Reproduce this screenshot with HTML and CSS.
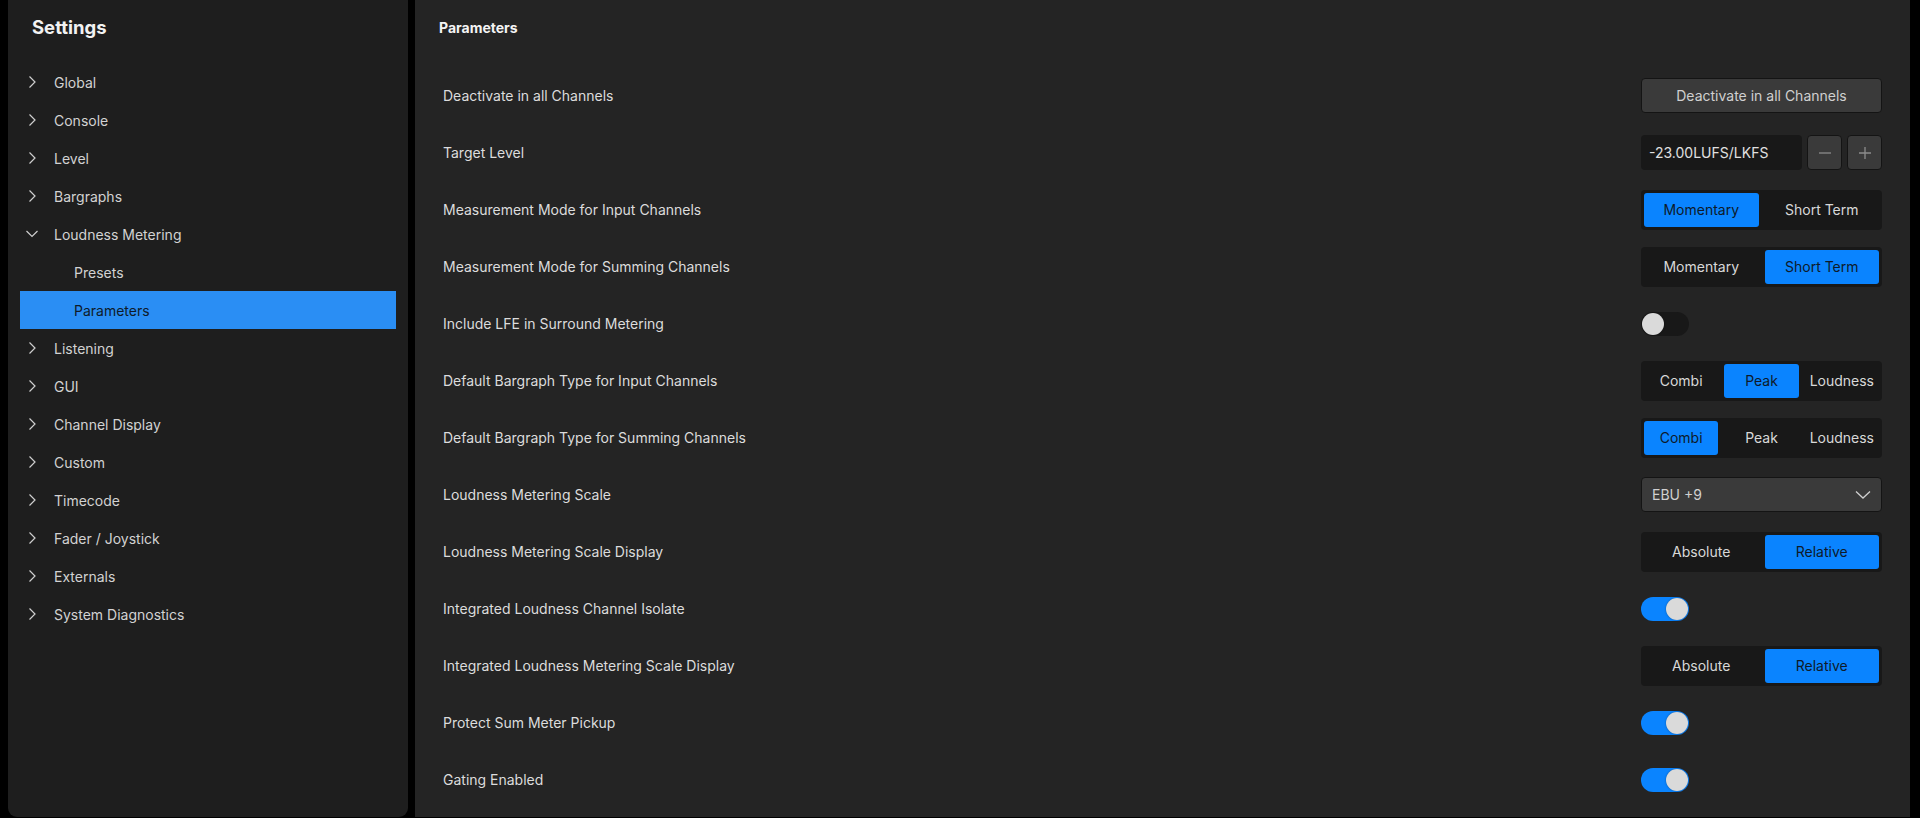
FILE: index.html
```html
<!DOCTYPE html>
<html>
<head>
<meta charset="utf-8">
<link rel="stylesheet" href="styles.css">
</head>
<body>
<div class="app">
  <aside class="sidebar">
    <div class="side-title">Settings</div>
    <nav class="nav">
      <div class="item"><span class="chev"><svg width="12" height="12" viewBox="0 0 12 12"><path d="M3.5 0.5 L9 6 L3.5 11.5" fill="none" stroke="#cfcfcf" stroke-width="1.2"/></svg></span><span>Global</span></div>
      <div class="item"><span class="chev"><svg width="12" height="12" viewBox="0 0 12 12"><path d="M3.5 0.5 L9 6 L3.5 11.5" fill="none" stroke="#cfcfcf" stroke-width="1.2"/></svg></span><span>Console</span></div>
      <div class="item"><span class="chev"><svg width="12" height="12" viewBox="0 0 12 12"><path d="M3.5 0.5 L9 6 L3.5 11.5" fill="none" stroke="#cfcfcf" stroke-width="1.2"/></svg></span><span>Level</span></div>
      <div class="item"><span class="chev"><svg width="12" height="12" viewBox="0 0 12 12"><path d="M3.5 0.5 L9 6 L3.5 11.5" fill="none" stroke="#cfcfcf" stroke-width="1.2"/></svg></span><span>Bargraphs</span></div>
      <div class="item"><span class="chev"><svg width="12" height="12" viewBox="0 0 12 12"><path d="M0.5 3 L6 8.5 L11.5 3" fill="none" stroke="#cfcfcf" stroke-width="1.2"/></svg></span><span>Loudness Metering</span></div>
      <div class="item sub"><span>Presets</span></div>
      <div class="item sub active"><span>Parameters</span></div>
      <div class="item"><span class="chev"><svg width="12" height="12" viewBox="0 0 12 12"><path d="M3.5 0.5 L9 6 L3.5 11.5" fill="none" stroke="#cfcfcf" stroke-width="1.2"/></svg></span><span>Listening</span></div>
      <div class="item"><span class="chev"><svg width="12" height="12" viewBox="0 0 12 12"><path d="M3.5 0.5 L9 6 L3.5 11.5" fill="none" stroke="#cfcfcf" stroke-width="1.2"/></svg></span><span>GUI</span></div>
      <div class="item"><span class="chev"><svg width="12" height="12" viewBox="0 0 12 12"><path d="M3.5 0.5 L9 6 L3.5 11.5" fill="none" stroke="#cfcfcf" stroke-width="1.2"/></svg></span><span>Channel Display</span></div>
      <div class="item"><span class="chev"><svg width="12" height="12" viewBox="0 0 12 12"><path d="M3.5 0.5 L9 6 L3.5 11.5" fill="none" stroke="#cfcfcf" stroke-width="1.2"/></svg></span><span>Custom</span></div>
      <div class="item"><span class="chev"><svg width="12" height="12" viewBox="0 0 12 12"><path d="M3.5 0.5 L9 6 L3.5 11.5" fill="none" stroke="#cfcfcf" stroke-width="1.2"/></svg></span><span>Timecode</span></div>
      <div class="item"><span class="chev"><svg width="12" height="12" viewBox="0 0 12 12"><path d="M3.5 0.5 L9 6 L3.5 11.5" fill="none" stroke="#cfcfcf" stroke-width="1.2"/></svg></span><span>Fader / Joystick</span></div>
      <div class="item"><span class="chev"><svg width="12" height="12" viewBox="0 0 12 12"><path d="M3.5 0.5 L9 6 L3.5 11.5" fill="none" stroke="#cfcfcf" stroke-width="1.2"/></svg></span><span>Externals</span></div>
      <div class="item"><span class="chev"><svg width="12" height="12" viewBox="0 0 12 12"><path d="M3.5 0.5 L9 6 L3.5 11.5" fill="none" stroke="#cfcfcf" stroke-width="1.2"/></svg></span><span>System Diagnostics</span></div>
    </nav>
  </aside>
  <main class="main">
    <div class="main-title">Parameters</div>
    <div class="rows">
      <div class="row">
        <div class="label">Deactivate in all Channels</div>
        <div class="ctrl"><div class="btn">Deactivate in all Channels</div></div>
      </div>
      <div class="row">
        <div class="label">Target Level</div>
        <div class="ctrl stepper">
          <div class="field">-23.00LUFS/LKFS</div>
          <div class="sbtn"><svg width="14" height="14" viewBox="0 0 14 14"><path d="M1 7 H13" stroke="#8c8c8c" stroke-width="1.3"/></svg></div>
          <div class="sbtn"><svg width="14" height="14" viewBox="0 0 14 14"><path d="M1 7 H13 M7 1 V13" stroke="#8c8c8c" stroke-width="1.3"/></svg></div>
        </div>
      </div>
      <div class="row">
        <div class="label">Measurement Mode for Input Channels</div>
        <div class="ctrl seg"><div class="opt on">Momentary</div><div class="opt">Short Term</div></div>
      </div>
      <div class="row">
        <div class="label">Measurement Mode for Summing Channels</div>
        <div class="ctrl seg"><div class="opt">Momentary</div><div class="opt on">Short Term</div></div>
      </div>
      <div class="row">
        <div class="label">Include LFE in Surround Metering</div>
        <div class="ctrl"><div class="toggle"><div class="knob"></div></div></div>
      </div>
      <div class="row">
        <div class="label">Default Bargraph Type for Input Channels</div>
        <div class="ctrl seg"><div class="opt">Combi</div><div class="opt on">Peak</div><div class="opt">Loudness</div></div>
      </div>
      <div class="row">
        <div class="label">Default Bargraph Type for Summing Channels</div>
        <div class="ctrl seg"><div class="opt on">Combi</div><div class="opt">Peak</div><div class="opt">Loudness</div></div>
      </div>
      <div class="row">
        <div class="label">Loudness Metering Scale</div>
        <div class="ctrl"><div class="select"><span>EBU +9</span><svg width="16" height="10" viewBox="0 0 16 10"><path d="M1 1.5 L8 8 L15 1.5" fill="none" stroke="#cfcfcf" stroke-width="1.3"/></svg></div></div>
      </div>
      <div class="row">
        <div class="label">Loudness Metering Scale Display</div>
        <div class="ctrl seg"><div class="opt">Absolute</div><div class="opt on">Relative</div></div>
      </div>
      <div class="row">
        <div class="label">Integrated Loudness Channel Isolate</div>
        <div class="ctrl"><div class="toggle checked"><div class="knob"></div></div></div>
      </div>
      <div class="row">
        <div class="label">Integrated Loudness Metering Scale Display</div>
        <div class="ctrl seg"><div class="opt">Absolute</div><div class="opt on">Relative</div></div>
      </div>
      <div class="row">
        <div class="label">Protect Sum Meter Pickup</div>
        <div class="ctrl"><div class="toggle checked"><div class="knob"></div></div></div>
      </div>
      <div class="row">
        <div class="label">Gating Enabled</div>
        <div class="ctrl"><div class="toggle checked"><div class="knob"></div></div></div>
      </div>
    </div>
  </main>
</div>
</body>
</html>
```

FILE: styles.css
```css
* { box-sizing: border-box; }
html, body {
  margin: 0;
  padding: 0;
  background: #000;
  height: 818px;
  overflow: hidden;
  font-family: Inter, "Noto Sans", sans-serif;
  font-size: 14px;
}
.app {
  display: flex;
  height: 817px;
  padding-left: 8px;
  padding-right: 10px;
  gap: 7px;
}
.sidebar {
  width: 400px;
  flex: none;
  background: #1e1e1e;
  border-radius: 0 0 9px 9px;
  padding: 0 12px;
}
.side-title {
  height: 54px;
  display: flex;
  align-items: center;
  padding-left: 12px;
  font-size: 18.5px;
  font-weight: 700;
  color: #f2f2f2;
}
.nav {
  margin-top: 9px;
  display: flex;
  flex-direction: column;
}
.item {
  height: 38px;
  display: flex;
  align-items: center;
  padding-left: 6px;
  color: #d2d2d2;
  font-size: 14px;
}
.chev {
  width: 12px;
  height: 12px;
  display: flex;
  margin-right: 16px;
}
.item.sub { padding-left: 54px; }
.item.active {
  background: #2a8ef4;
  color: #0f1b29;
}
.main {
  flex: 1;
  background: #242424;
  padding: 0 28px 0 24px;
}
.main-title {
  height: 54px;
  display: flex;
  align-items: center;
  font-size: 14px;
  font-weight: 700;
  color: #f4f4f4;
}
.rows {
  margin-top: 13px;
  display: flex;
  flex-direction: column;
}
.row {
  height: 57px;
  display: flex;
  align-items: center;
  justify-content: space-between;
  padding-left: 4px;
}
.label {
  color: #dcdcdc;
  font-size: 14px;
}
.ctrl {
  width: 241px;
  display: flex;
  align-items: center;
}
.btn, .select {
  width: 241px;
  height: 35px;
  background: #3a3a3a;
  border: 1px solid #141414;
  border-radius: 4px;
  color: #d0d0d0;
  display: flex;
  align-items: center;
  justify-content: center;
}
.select {
  justify-content: space-between;
  padding: 0 10px 0 10px;
}
.stepper { gap: 5px; }
.field {
  flex: 1;
  height: 35px;
  background: #181818;
  border-radius: 4px;
  color: #e0e0e0;
  display: flex;
  align-items: center;
  padding-left: 8px;
}
.sbtn {
  width: 35px;
  height: 35px;
  background: #3a3a3a;
  border: 1px solid #141414;
  border-radius: 4px;
  display: flex;
  align-items: center;
  justify-content: center;
}
.seg {
  height: 40px;
  background: #181818;
  border-radius: 4px;
  padding: 3px;
  gap: 6px;
}
.opt {
  flex: 1;
  height: 100%;
  display: flex;
  align-items: center;
  justify-content: center;
  color: #d8d8d8;
  border-radius: 3px;
}
.opt.on {
  background: #0a84ff;
  color: #0e1a2a;
}
.toggle {
  width: 48px;
  height: 24px;
  border-radius: 12px;
  background: #181818;
  padding: 1px;
  display: flex;
}
.knob {
  width: 22px;
  height: 22px;
  border-radius: 50%;
  background: #dadada;
  box-shadow: 0 0 2px rgba(0,0,0,0.4);
}
.toggle.checked {
  background: #0a84ff;
  justify-content: flex-end;
}
```
